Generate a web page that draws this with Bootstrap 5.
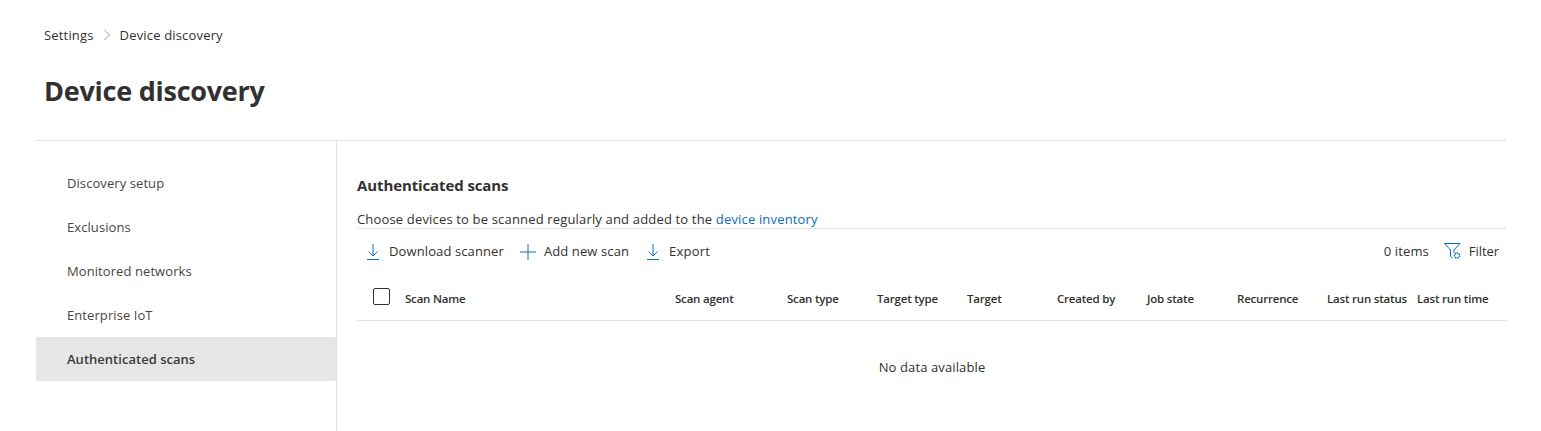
<!DOCTYPE html>
<html lang="en">
<head>
<meta charset="utf-8">
<title>Device discovery</title>
<link href="https://cdn.jsdelivr.net/npm/bootstrap@5.3.0/dist/css/bootstrap.min.css" rel="stylesheet">
<style>
html,body{height:100%;overflow:hidden}
body{font-family:"Open Sans","Noto Sans",sans-serif;font-size:13px;color:#323130;background:#fff}
.shell{padding:0 35px 0 36px;height:431px;display:flex;flex-direction:column}
.crumbs{padding:24px 0 0 8px;height:46px;line-height:18px;display:flex;align-items:center;gap:9px;letter-spacing:.17px}
.crumbs svg{display:block}
.page-title{font-size:27px;font-weight:700;line-height:38px;margin:26px 0 30px 8px;letter-spacing:-.25px;color:#323130}
.split{flex:1;display:flex;border-top:1px solid #e1e1e1;min-height:0}
.side{width:301px;flex:none;border-right:1px solid #e1e1e1;padding-top:20px}
.side-link{display:block;height:44px;line-height:44px;padding-left:31px;color:#484644;text-decoration:none;letter-spacing:.08px}
.side-link.on{background:#e6e6e6;font-weight:600;border-radius:2px;letter-spacing:.02px;color:#3b3a39}
.pane{flex:1;padding:34px 0 0 20px;min-width:0}
.pane-head{font-size:15px;font-weight:700;line-height:20px;margin:0;letter-spacing:-.11px;color:#323130}
.pane-desc{line-height:18px;margin:15px 0 0;height:18px;letter-spacing:.166px}
.pane-desc a{color:#0f6cbd;text-decoration:none}
.tools{border-top:1px solid #e1e1e1;height:46px;display:flex;align-items:center}
.tool{display:flex;align-items:center;gap:8px;padding:0;border:0;background:none;color:#323130;font-size:13px;letter-spacing:.11px}
.tool svg{display:block}
.tool-a{margin-left:8px}
.tool-b{margin-left:16px}
.tool-c{margin-left:16px;letter-spacing:.2px}
.count{margin-right:15px;letter-spacing:.1px}
.tool-f{margin-right:7px;gap:7px;letter-spacing:-.06px}
.grid-table{table-layout:fixed;width:100%;margin:0;--bs-table-color:#323130;--bs-table-border-color:#e1e1e1}
.grid-table th{font-size:11.500px;font-weight:600;height:46px;padding:3px 0 0;vertical-align:middle;letter-spacing:-.2px;white-space:nowrap;border-bottom:1px solid #e1e1e1;color:#323130}
.grid-table th:nth-child(1){width:48px;padding-top:0}
.grid-table th:nth-child(2){width:270px}
.grid-table th:nth-child(3){width:112px}
.grid-table th{width:90px}
.tick{display:block;width:17px;height:17px;margin-left:16px;border:1px solid #323130;border-radius:2px}
.grid-table td{border:0;text-align:center;padding:37px 0 0;line-height:18px;letter-spacing:.12px}
</style>
</head>
<body>
<div class="shell">
  <nav class="crumbs"><span>Settings</span>
    <svg width="8" height="12" viewBox="0 0 8 12" aria-hidden="true"><path d="M1.500 1l5 5-5 5" fill="none" stroke="#a19f9d"/></svg>
    <span>Device discovery</span></nav>
  <h1 class="page-title">Device discovery</h1>
  <div class="split">
    <aside class="side">
      <a class="side-link" href="#">Discovery setup</a>
      <a class="side-link" href="#">Exclusions</a>
      <a class="side-link" href="#">Monitored networks</a>
      <a class="side-link" href="#">Enterprise IoT</a>
      <a class="side-link on" href="#">Authenticated scans</a>
    </aside>
    <main class="pane">
      <h2 class="pane-head">Authenticated scans</h2>
      <p class="pane-desc">Choose devices to be scanned regularly and added to the <a href="#">device inventory</a></p>
      <div class="tools">
        <button class="tool tool-a" type="button">
          <svg width="16" height="18" viewBox="0 0 16 18" aria-hidden="true"><path d="M8 1v12M3.500 8.500L8 13l4.500-4.500" fill="none" stroke="#0f6cbd"/><path d="M2 16.500h12" stroke="#0f6cbd"/></svg>
          Download scanner</button>
        <button class="tool tool-b" type="button">
          <svg width="16" height="16" viewBox="0 0 16 16" aria-hidden="true"><path d="M8 0v16M0 8h16" stroke="#0f6cbd"/></svg>
          Add new scan</button>
        <button class="tool tool-c" type="button">
          <svg width="16" height="18" viewBox="0 0 16 18" aria-hidden="true"><path d="M8 1v12M3.500 8.500L8 13l4.500-4.500" fill="none" stroke="#0f6cbd"/><path d="M2 16.500h12" stroke="#0f6cbd"/></svg>
          Export</button>
        <span class="ms-auto count">0 items</span>
        <button class="tool tool-f" type="button">
          <svg width="18" height="17" viewBox="0 0 18 17" aria-hidden="true"><path d="M.5.500h15.500L10 7v2.500M.5.500L6.500 7v6.500l2 1.500" fill="none" stroke="#0f6cbd"/><circle cx="13" cy="12.500" r="2.500" fill="none" stroke="#0f6cbd" stroke-width="1.500" stroke-dasharray="1.500 .7"/></svg>
          Filter</button>
      </div>
      <table class="table grid-table">
        <thead><tr>
          <th><span class="tick"></span></th>
          <th>Scan Name</th><th>Scan agent</th><th>Scan type</th><th>Target type</th><th>Target</th><th>Created by</th><th>Job state</th><th>Recurrence</th><th>Last run status</th><th>Last run time</th>
        </tr></thead>
        <tbody><tr><td colspan="11">No data available</td></tr></tbody>
      </table>
    </main>
  </div>
</div>
<script src="https://cdn.jsdelivr.net/npm/bootstrap@5.3.0/dist/js/bootstrap.bundle.min.js"></script>
</body>
</html>
